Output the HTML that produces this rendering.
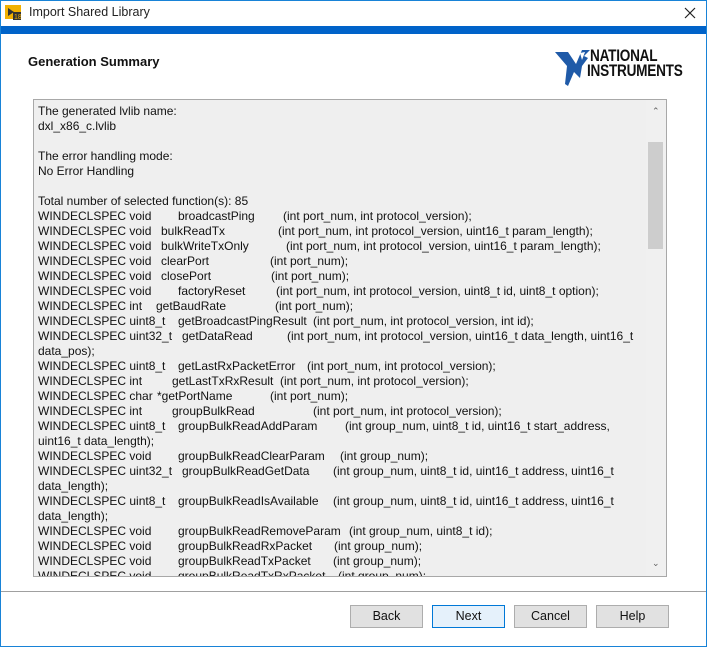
<!DOCTYPE html>
<html><head><style>
*{margin:0;padding:0;box-sizing:border-box}
body{width:707px;height:647px;overflow:hidden;background:#fff;font-family:"Liberation Sans","Noto Sans CJK KR",sans-serif;position:relative}
.win{position:absolute;left:0;top:0;width:707px;height:647px;border:1px solid #1883d7}
.title{position:absolute;left:29px;top:5px;font-size:12.5px;color:#222}
.band{position:absolute;left:1px;right:1px;top:26px;height:8px;background:#0063c9}
.h{position:absolute;left:28px;top:54px;font-size:13px;font-weight:bold;color:#111}
.box{position:absolute;left:33px;top:99px;width:634px;height:478px;border:1px solid #a8a8a8;background:#efefef;overflow:hidden}
.l{position:absolute;left:4px;font-size:12px;color:#111;white-space:nowrap;letter-spacing:0;line-height:15px}
.sb{position:absolute;left:612px;top:0;width:20px;height:476px;background:#f0f0f0}
.th{position:absolute;left:2px;top:42px;width:15px;height:107px;background:#cdcdcd}
.sep{position:absolute;left:1px;right:1px;top:591px;height:1px;background:#a0a0a0}
.btn{position:absolute;top:605px;width:73px;height:23px;border:1px solid #adadad;background:#e1e1e1;font-size:12.5px;text-align:center;line-height:21px;color:#111}
.ni{position:absolute;font-size:17px;font-weight:bold;color:#111;transform:scaleX(.8);transform-origin:left;letter-spacing:-0.3px}
</style></head><body>
<div class="win"></div>
<svg style="position:absolute;left:5px;top:4px" width="16" height="16"><rect x="0" y="1" width="16" height="14" fill="#f2b100"/><path d="M3 4 L9 8 L3 12Z" fill="#333"/><rect x="8" y="8" width="8" height="8" fill="#333"/><text x="9" y="15" font-size="7" fill="#f2b100" font-family="Liberation Sans">18</text></svg>
<div class="title">Import Shared Library</div>
<svg style="position:absolute;left:684px;top:7px" width="12" height="12"><path d="M1 1 L11 11 M11 1 L1 11" stroke="#222" stroke-width="1.2"/></svg>
<div class="band"></div>
<div class="h">Generation Summary</div>
<svg style="position:absolute;left:554px;top:48px" width="40" height="40"><path d="M1 4 L14 4 L22 16 L28 2 L36 2 L30 8 L34 10 L28 18 L26 30 L20 24 L14 38 L11 36 L13 18Z" fill="#1f5aa8"/><path d="M26 5 L31 4 L28 12Z" fill="#fff"/></svg>
<div class="ni" style="left:590px;top:46px">NATIONAL</div>
<div class="ni" style="left:587px;top:61px">INSTRUMENTS</div>
<div class="box">
<div class="l" style="top:4px">The generated lvlib name:</div>
<div class="l" style="top:19px">dxl_x86_c.lvlib</div>
<div class="l" style="top:49px">The error handling mode:</div>
<div class="l" style="top:64px">No Error Handling</div>
<div class="l" style="top:94px">Total number of selected function(s): 85</div>
<div id="rows"></div>
<div class="sb"><div style="position:absolute;left:6px;top:6px;font-size:9px;color:#606060">&#8963;</div><div class="th"></div><div style="position:absolute;left:6px;top:458px;font-size:9px;color:#606060">&#8964;</div></div>
</div>
<div class="sep"></div>
<div class="btn" style="left:350px">Back</div>
<div class="btn" style="left:432px;border-color:#0078d7;background:#e5f1fb">Next</div>
<div class="btn" style="left:514px">Cancel</div>
<div class="btn" style="left:596px">Help</div>
<script>
var R=[
["void","broadcastPing",178,283,"(int port_num, int protocol_version);"],
["void","bulkReadTx",161,278,"(int port_num, int protocol_version, uint16_t param_length);"],
["void","bulkWriteTxOnly",161,286,"(int port_num, int protocol_version, uint16_t param_length);"],
["void","clearPort",161,270,"(int port_num);"],
["void","closePort",161,271,"(int port_num);"],
["void","factoryReset",178,276,"(int port_num, int protocol_version, uint8_t id, uint8_t option);"],
["int","getBaudRate",156,275,"(int port_num);"],
["uint8_t","getBroadcastPingResult",178,313,"(int port_num, int protocol_version, int id);"],
["uint32_t","getDataRead",182,287,"(int port_num, int protocol_version, uint16_t data_length, uint16_t","data_pos);"],
["uint8_t","getLastRxPacketError",178,307,"(int port_num, int protocol_version);"],
["int","getLastTxRxResult",172,280,"(int port_num, int protocol_version);"],
["char","*getPortName",157,270,"(int port_num);"],
["int","groupBulkRead",172,313,"(int port_num, int protocol_version);"],
["uint8_t","groupBulkReadAddParam",178,345,"(int group_num, uint8_t id, uint16_t start_address,","uint16_t data_length);"],
["void","groupBulkReadClearParam",178,340,"(int group_num);"],
["uint32_t","groupBulkReadGetData",182,333,"(int group_num, uint8_t id, uint16_t address, uint16_t","data_length);"],
["uint8_t","groupBulkReadIsAvailable",178,333,"(int group_num, uint8_t id, uint16_t address, uint16_t","data_length);"],
["void","groupBulkReadRemoveParam",178,349,"(int group_num, uint8_t id);"],
["void","groupBulkReadRxPacket",178,334,"(int group_num);"],
["void","groupBulkReadTxPacket",178,333,"(int group_num);"],
["void","groupBulkReadTxRxPacket",178,338,"(int group_num);"]];
var h="",t=109;
R.forEach(function(r){
h+='<div class="l" style="top:'+t+'px">WINDECLSPEC '+r[0]+'</div><div class="l" style="top:'+t+'px;left:'+(r[2]-34)+'px">'+r[1]+'</div><div class="l" style="top:'+t+'px;left:'+(r[3]-34)+'px">'+r[4]+'</div>';
t+=15;if(r[5]){h+='<div class="l" style="top:'+t+'px">'+r[5]+'</div>';t+=15;}
});
document.getElementById('rows').outerHTML=h;
</script>
</body></html>
